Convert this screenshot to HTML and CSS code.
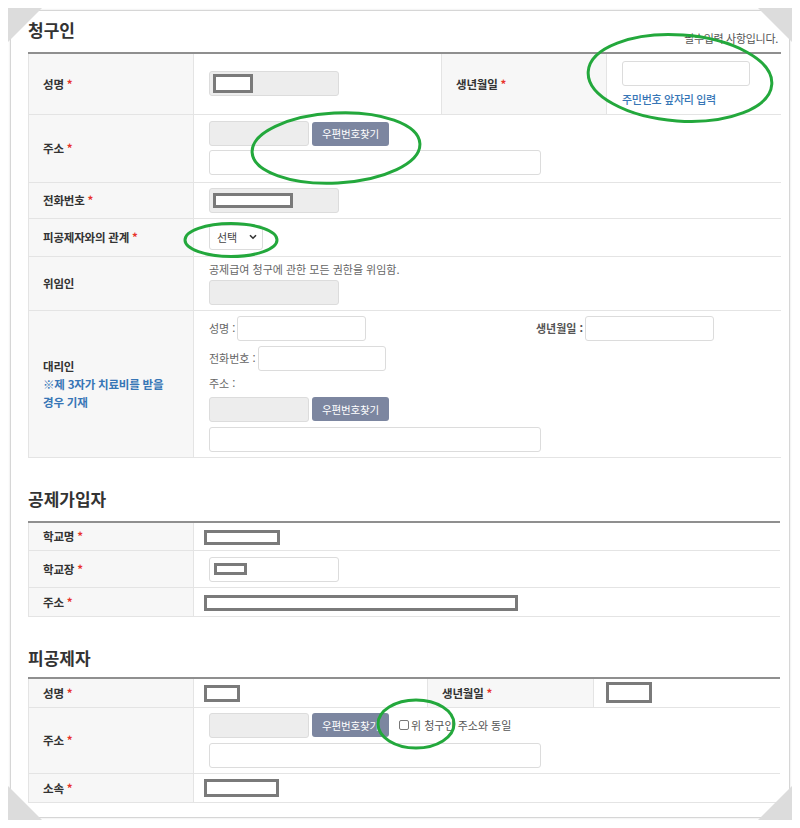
FILE: index.html
```html
<!DOCTYPE html>
<html lang="ko">
<head>
<meta charset="utf-8">
<title>공제급여 청구서</title>
<link rel="stylesheet" href="styles.css">
</head>
<body>
<div class="frame">
  <span class="corner tl"></span>
  <span class="corner tr"></span>
  <span class="corner bl"></span>
  <span class="corner br"></span>

  <section class="sec first">
    <div class="sec-head">
      <h2>청구인</h2>
      <span class="note">필수입력 사항입니다.</span>
    </div>
    <table class="form t1">
      <colgroup><col class="c-lab"><col class="c-v1"><col class="c-lab"><col class="c-v2"></colgroup>
      <tr class="r1">
        <th class="lab">성명 <span class="req">*</span></th>
        <td class="val"><div class="field dis w130"><span class="red r-name1"></span></div></td>
        <th class="lab">생년월일 <span class="req">*</span></th>
        <td class="val v2"><input class="inp w128" type="text"><div class="hint">주민번호 앞자리 입력</div></td>
      </tr>
      <tr class="r2">
        <th class="lab">주소 <span class="req">*</span></th>
        <td class="val" colspan="3">
          <div class="line"><input class="inp zip dis" type="text" readonly><button class="btn" type="button">우편번호찾기</button></div>
          <div class="line gap4"><input class="inp addr" type="text"></div>
        </td>
      </tr>
      <tr class="r3">
        <th class="lab">전화번호 <span class="req">*</span></th>
        <td class="val" colspan="3"><div class="field dis w130"><span class="red r-tel"></span></div></td>
      </tr>
      <tr class="r4">
        <th class="lab">피공제자와의 관계 <span class="req">*</span></th>
        <td class="val" colspan="3">
          <div class="select">선택<svg class="chev" width="8" height="6" viewBox="0 0 8 6"><path d="M1 1.2 L4 4.2 L7 1.2" fill="none" stroke="#333" stroke-width="1.6"/></svg></div>
        </td>
      </tr>
      <tr class="r5">
        <th class="lab">위임인</th>
        <td class="val" colspan="3">
          <div class="txt">공제급여 청구에 관한 모든 권한을 위임함.</div>
          <input class="inp w130 dis mt3" type="text" readonly>
        </td>
      </tr>
      <tr class="r6">
        <th class="lab tall">대리인<br><span class="blue">※제 3자가 치료비를 받을<br>경우 기재</span></th>
        <td class="val" colspan="3">
          <div class="line">
            <span class="grp gl"><span class="lbl">성명 :</span><input class="inp w129" type="text"></span>
            <span class="grp"><span class="lbl bold">생년월일 :</span><input class="inp w129" type="text"></span>
          </div>
          <div class="line gap5"><span class="lbl">전화번호 :</span><input class="inp w128" type="text"></div>
          <div class="line addr-lbl"><span class="lbl">주소 :</span></div>
          <div class="line"><input class="inp zip dis" type="text" readonly><button class="btn" type="button">우편번호찾기</button></div>
          <div class="line gap5"><input class="inp addr" type="text"></div>
        </td>
      </tr>
    </table>
  </section>

  <section class="sec">
    <div class="sec-head"><h2>공제가입자</h2></div>
    <table class="form t2">
      <colgroup><col class="c-lab"><col></colgroup>
      <tr class="rs">
        <th class="lab">학교명 <span class="req">*</span></th>
        <td class="val tv"><span class="red r-school"></span></td>
      </tr>
      <tr class="rm">
        <th class="lab">학교장 <span class="req">*</span></th>
        <td class="val"><div class="field w130"><span class="red r-head"></span></div></td>
      </tr>
      <tr class="rs">
        <th class="lab">주소 <span class="req">*</span></th>
        <td class="val tv"><span class="red r-addr"></span></td>
      </tr>
    </table>
  </section>

  <section class="sec">
    <div class="sec-head tight"><h2>피공제자</h2></div>
    <table class="form t3">
      <colgroup><col class="c-lab"><col class="c-v3"><col class="c-lab3"><col></colgroup>
      <tr class="rs">
        <th class="lab">성명 <span class="req">*</span></th>
        <td class="val tv"><span class="red r-name3"></span></td>
        <th class="lab">생년월일 <span class="req">*</span></th>
        <td class="val tv2"><span class="red r-birth3"></span></td>
      </tr>
      <tr class="r2b">
        <th class="lab">주소 <span class="req">*</span></th>
        <td class="val" colspan="3">
          <div class="line"><input class="inp zip dis" type="text" readonly><button class="btn" type="button">우편번호찾기</button><label class="chk"><span class="box"></span>위 청구인 주소와 동일</label></div>
          <div class="line gap5"><input class="inp addr" type="text"></div>
        </td>
      </tr>
      <tr class="rs">
        <th class="lab">소속 <span class="req">*</span></th>
        <td class="val tv" colspan="3"><span class="red r-dept"></span></td>
      </tr>
    </table>
  </section>
</div>

<svg class="marks" width="800" height="828" viewBox="0 0 800 828">
  <g fill="none" stroke="#23a83c" stroke-width="3">
    <ellipse cx="680" cy="78" rx="92" ry="43" transform="rotate(4 680 78)"/>
    <ellipse cx="336" cy="148" rx="84" ry="35" transform="rotate(-3 336 148)"/>
    <ellipse cx="231" cy="240" rx="46" ry="16.5"/>
    <ellipse cx="416" cy="724" rx="38" ry="24"/>
  </g>
</svg>
</body>
</html>
```

FILE: styles.css
```css
html, body {
  margin: 0;
  padding: 0;
  background: #fff;
}
body {
  position: relative;
  width: 800px;
  height: 828px;
  font-family: "Noto Sans CJK KR", "Noto Sans", sans-serif;
  font-size: 11px;
  color: #555;
}

.frame {
  position: relative;
  box-sizing: border-box;
  margin: 10px 0 0 10px;
  width: 780px;
  height: 808px;
  border: 1px solid #d6d6d6;
  box-shadow: 0 0 2px rgba(0, 0, 0, 0.12);
  padding: 8px 9px 0 17px;
}

.corner {
  position: absolute;
  width: 34px;
  height: 34px;
  background: #dcdcdc;
}
.corner.tl { left: -3px; top: -3px; clip-path: polygon(0 0, 100% 0, 0 100%); }
.corner.tr { right: -3px; top: -3px; clip-path: polygon(0 0, 100% 0, 100% 100%); }
.corner.bl { left: -3px; bottom: -3px; clip-path: polygon(0 0, 0 100%, 100% 100%); }
.corner.br { right: -3px; bottom: -3px; clip-path: polygon(100% 0, 100% 100%, 0 100%); }

.sec { margin-top: 30px; }
.sec.first { margin-top: 0; }

.sec-head {
  display: flex;
  justify-content: space-between;
  align-items: flex-start;
  height: 22px;
  margin-bottom: 11px;
}
.sec-head.tight { margin-bottom: 8px; }
.sec-head h2 {
  margin: 0;
  font-size: 17px;
  line-height: 22px;
  font-weight: bold;
  color: #333;
}
.note {
  margin-top: 12px;
  margin-right: 2px;
  line-height: 14px;
  color: #555;
  letter-spacing: -0.3px;
}

table.form {
  width: 752px;
  table-layout: fixed;
  border-collapse: collapse;
  border-top: 2px solid #8f8f8f;
  border-left: 1px solid #e4e4e4;
}
.c-lab { width: 165px; }
.c-v1 { width: 248px; }
.c-v2 { width: 174px; }
.c-v3 { width: 234px; }
.c-lab3 { width: 166px; }

table.form th,
table.form td {
  border-bottom: 1px solid #e4e4e4;
  padding: 0;
  vertical-align: middle;
}
table.form th.lab {
  background: #f7f7f7;
  border-right: 1px solid #e4e4e4;
  border-left: 1px solid #e4e4e4;
  text-align: left;
  padding-left: 14px;
  font-size: 11.5px;
  font-weight: bold;
  color: #333;
  letter-spacing: -0.2px;
  white-space: nowrap;
}
table.form th.lab.tall { line-height: 18px; }
.req { color: #e8342c; }
.blue { color: #3776b6; }

table.form td.val { padding-left: 15px; }
table.form td.val.tv { padding-left: 10px; }
table.form td.val.tv2 { padding-left: 12px; }

.t1 .r1 { height: 61px; }
.t1 .r2 { height: 68px; }
.t1 .r3 { height: 36px; }
.t1 .r4 { height: 38px; }
.t1 .r5 { height: 54px; }
.t1 .r6 { height: 147px; }
.rs { height: 29px; }
.rm { height: 37px; }
.r2b { height: 66px; }

.inp, .field {
  display: inline-block;
  box-sizing: border-box;
  height: 25px;
  margin: 0;
  padding: 0 4px;
  border: 1px solid #dcdcdc;
  border-radius: 3px;
  background: #fff;
  font: inherit;
  vertical-align: middle;
  outline: none;
}
.field {
  display: flex;
  align-items: center;
  padding: 0 2px;
}
.dis { background: #ededed; }
.w130 { width: 130px; }
.w129 { width: 129px; }
.w128 { width: 128px; }
.zip { width: 100px; }
.addr { width: 332px; }
.mt3 { margin-top: 3px; display: block; }

.hint {
  margin-top: 5px;
  color: #3776b6;
  font-weight: 500;
  letter-spacing: -0.3px;
  line-height: 16px;
}

.line {
  display: flex;
  align-items: center;
}
.gap4 { margin-top: 4px; }
.gap5 { margin-top: 5px; }
.addr-lbl { height: 18px; margin-top: 3px; margin-bottom: 5px; }

.grp { display: flex; align-items: center; }
.gl { width: 327px; }
.lbl {
  margin-right: 2px;
  color: #666;
  white-space: nowrap;
}
.lbl.bold { font-weight: bold; color: #555; }

.txt {
  color: #666;
  line-height: 16px;
}

.btn {
  box-sizing: border-box;
  height: 24px;
  width: 77px;
  margin: 0 0 0 3px;
  padding: 0;
  border: 0;
  border-radius: 3px;
  background: #7c86a0;
  color: #fff;
  font: inherit;
  font-size: 10.5px;
  letter-spacing: -0.2px;
}

.select {
  box-sizing: border-box;
  display: inline-flex;
  align-items: center;
  justify-content: space-between;
  width: 54px;
  height: 25px;
  padding: 0 5px 0 7px;
  border: 1px solid #dcdcdc;
  border-radius: 3px;
  background: #fff;
  color: #444;
  font-size: 11px;
}

.chk {
  display: inline-flex;
  align-items: center;
  margin-left: 10px;
  color: #555;
}
.chk .box {
  box-sizing: border-box;
  width: 10px;
  height: 10px;
  margin-right: 2px;
  border: 1px solid #777;
  border-radius: 2px;
  background: #fff;
}

.red {
  display: inline-block;
  box-sizing: border-box;
  border: 3px solid #7a7a7a;
  background: #fff;
  vertical-align: middle;
}
.r-name1 { width: 40px; height: 19px; margin-left: 1px; }
.r-tel { width: 80px; height: 15px; margin-left: 1px; }
.r-school { width: 76px; height: 15px; }
.r-head { width: 33px; height: 12px; margin-left: 2px; }
.r-addr { width: 314px; height: 16px; }
.r-name3 { width: 36px; height: 17px; }
.r-birth3 { width: 46px; height: 21px; }
.r-dept { width: 75px; height: 18px; }

.marks {
  position: absolute;
  left: 0;
  top: 0;
  pointer-events: none;
}
```
